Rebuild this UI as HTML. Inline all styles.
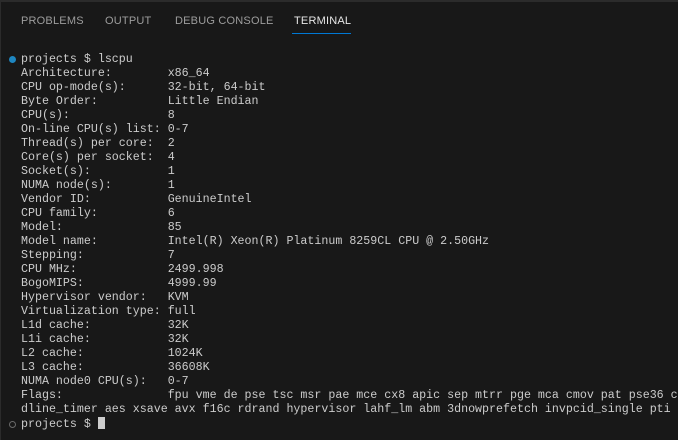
<!DOCTYPE html>
<html><head><style>
html,body{margin:0;padding:0;}
body{width:678px;height:440px;background:#181818;overflow:hidden;position:relative;font-family:"Liberation Sans",sans-serif;}
.top{position:absolute;left:0;top:0;width:678px;height:2px;background:#2b2b2b;}
.left{position:absolute;left:0;top:0;width:1px;height:440px;background:#2b2b2b;}
.tab{position:absolute;top:15px;font-size:11px;color:#9d9d9d;letter-spacing:0.2px;}
.ul{position:absolute;left:292px;top:33px;width:59px;height:1px;background:#0078d4;}
pre{position:absolute;left:21px;top:53px;margin:0;font-family:"Liberation Mono",monospace;font-size:11.65px;line-height:14px;color:#cccccc;white-space:pre;}
.dot{position:absolute;left:9px;top:56px;width:7px;height:7px;border-radius:50%;background:#1e86c0;}
.dot2{position:absolute;left:9px;top:421px;width:5px;height:5px;border-radius:50%;border:1px solid #6a6a6a;}
.cur{display:inline-block;width:7px;height:12px;background:#cccccc;vertical-align:-2px;}
</style></head><body>
<div class="top"></div><div class="left"></div>
<div class="tab" style="left:21px">PROBLEMS</div>
<div class="tab" style="left:105px">OUTPUT</div>
<div class="tab" style="left:175px">DEBUG CONSOLE</div>
<div class="tab" style="left:294px;color:#e7e7e7">TERMINAL</div>
<div class="ul"></div>
<div class="dot"></div><div class="dot2"></div>
<pre>projects $ lscpu
Architecture:        x86_64
CPU op-mode(s):      32-bit, 64-bit
Byte Order:          Little Endian
CPU(s):              8
On-line CPU(s) list: 0-7
Thread(s) per core:  2
Core(s) per socket:  4
Socket(s):           1
NUMA node(s):        1
Vendor ID:           GenuineIntel
CPU family:          6
Model:               85
Model name:          Intel(R) Xeon(R) Platinum 8259CL CPU @ 2.50GHz
Stepping:            7
CPU MHz:             2499.998
BogoMIPS:            4999.99
Hypervisor vendor:   KVM
Virtualization type: full
L1d cache:           32K
L1i cache:           32K
L2 cache:            1024K
L3 cache:            36608K
NUMA node0 CPU(s):   0-7
Flags:               fpu vme de pse tsc msr pae mce cx8 apic sep mtrr pge mca cmov pat pse36 c
dline_timer aes xsave avx f16c rdrand hypervisor lahf_lm abm 3dnowprefetch invpcid_single pti
projects $ <span class="cur"></span></pre>
</body></html>
